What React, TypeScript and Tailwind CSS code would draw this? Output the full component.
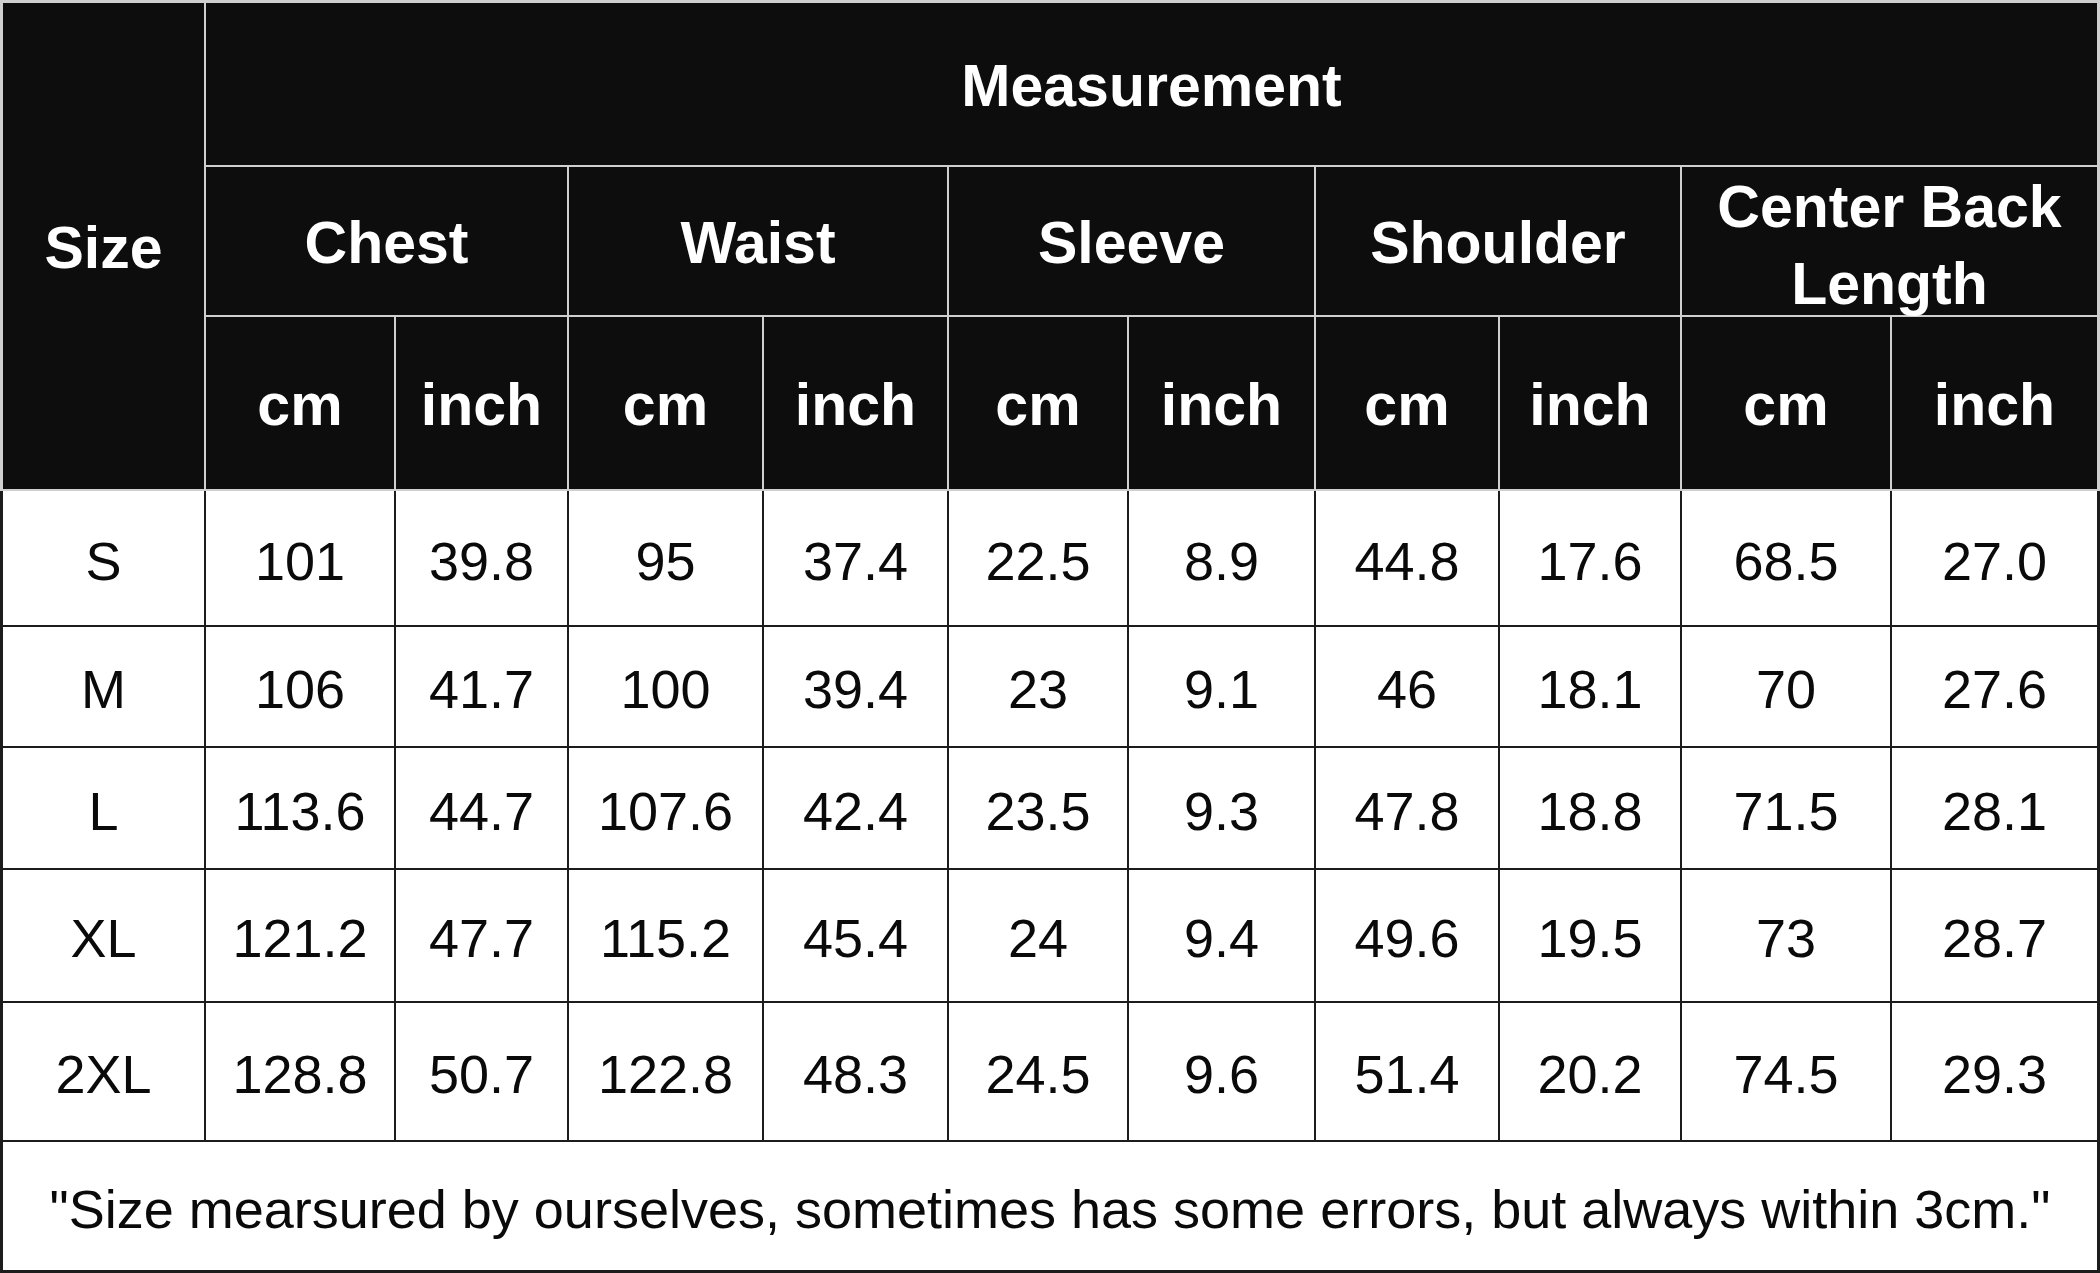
import React from "react";

const groups = ["Chest", "Waist", "Sleeve", "Shoulder"];

const rows: string[][] = [
  ["S", "101", "39.8", "95", "37.4", "22.5", "8.9", "44.8", "17.6", "68.5", "27.0"],
  ["M", "106", "41.7", "100", "39.4", "23", "9.1", "46", "18.1", "70", "27.6"],
  ["L", "113.6", "44.7", "107.6", "42.4", "23.5", "9.3", "47.8", "18.8", "71.5", "28.1"],
  ["XL", "121.2", "47.7", "115.2", "45.4", "24", "9.4", "49.6", "19.5", "73", "28.7"],
  ["2XL", "128.8", "50.7", "122.8", "48.3", "24.5", "9.6", "51.4", "20.2", "74.5", "29.3"],
];

const font = { fontFamily: '"Liberation Sans", Arial, sans-serif' };

export default function App() {
  const hcell = "bg-[#0d0d0d] flex items-center justify-center pt-[5px] text-white font-bold text-[59px] leading-none";
  const dcell = "bg-white flex items-center justify-center pt-[5px] text-[#0a0a0a] text-[54px] leading-none";
  return (
    <div className="w-[2100px] h-[1273px] flex flex-col bg-white" style={font}>
      <div className="grid grid-cols-[201px_188px_171px_193px_183px_178px_185px_182px_180px_208px_1fr] grid-rows-[162px_148px_172px] gap-[2px] bg-[#cfcfcf] pt-[3px] px-[3px] pb-[2px]">
        <div className={`${hcell} row-span-3`}>Size</div>
        <div className={`${hcell} col-span-10`}>Measurement</div>
        {groups.map((g) => (
          <div key={g} className={`${hcell} col-span-2`}>
            {g}
          </div>
        ))}
        <div className="bg-[#0d0d0d] col-span-2 flex items-center justify-center text-white font-bold text-[59px]">
          <div className="flex flex-col items-center mt-[10px] leading-[77px]">
            <span>Center Back</span>
            <span>Length</span>
          </div>
        </div>
        {Array.from({ length: 5 }).flatMap((_, i) => [
          <div key={`c${i}`} className={hcell}>cm</div>,
          <div key={`i${i}`} className={hcell}>inch</div>,
        ])}
      </div>
      <div className="grid grid-cols-[201px_188px_171px_193px_183px_178px_185px_182px_180px_208px_1fr] grid-rows-[134px_119px_120px_131px_137px_128px] gap-[2px] bg-[#1c1c1c] px-[3px] pb-[3px]">
        {rows.flatMap((r, ri) =>
          r.map((v, ci) => (
            <div key={`${ri}-${ci}`} className={dcell}>
              {v}
            </div>
          ))
        )}
        <div className={`${dcell} col-span-11`}>
          "Size mearsured by ourselves, sometimes has some errors, but always within 3cm."
        </div>
      </div>
    </div>
  );
}
